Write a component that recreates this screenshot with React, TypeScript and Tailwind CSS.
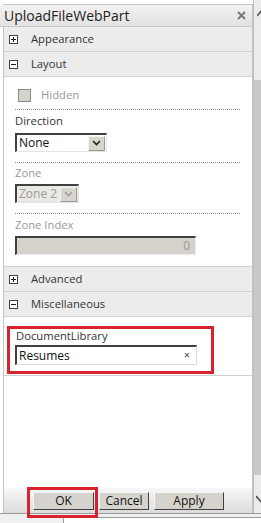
import React from 'react';

const Dotted = () => (
  <div className="ml-[11px] mr-[12px] border-t border-dotted border-[#7d8fb5]" />
);

const ToggleBox = ({ open }: { open: boolean }) => (
  <div className="w-[9px] h-[9px] border border-[#444] bg-white flex items-center justify-center">
    <svg width="7" height="7" viewBox="0 0 7 7">
      <line x1="1" y1="3.5" x2="6" y2="3.5" stroke="#222" strokeWidth="1" />
      {!open && <line x1="3.5" y1="1" x2="3.5" y2="6" stroke="#222" strokeWidth="1" />}
    </svg>
  </div>
);

const SectionRow = ({ label, open }: { label: string; open: boolean }) => (
  <div className="h-[25px] flex items-center pl-[5px] gap-[13px] bg-[#ececec] border-b border-[#d2d2d2] text-[11.25px] text-[#333]">
    <ToggleBox open={open} />
    <span>{label}</span>
  </div>
);

const Chevron = ({ color }: { color: string }) => (
  <svg width="9" height="6" viewBox="0 0 9 6">
    <path d="M1 1 L4.5 4.5 L8 1" fill="none" stroke={color} strokeWidth="1.6" />
  </svg>
);

const SelectBox = ({ value, width, disabled }: { value: string; width: string; disabled?: boolean }) => (
  <div
    className={`${width} h-[19px] flex items-center border-t-2 border-l-2 border-b border-r border-t-[#404040] border-l-[#404040] border-b-[#e4e4e4] border-r-[#e4e4e4] ${
      disabled ? 'bg-[#ebe9e4] text-[#9a9a9a]' : 'bg-white text-[#111]'
    }`}
  >
    <span className="flex-1 pl-[2px] text-[12px] leading-none">{value}</span>
    <div className="w-[17px] h-[15px] mr-[1px] bg-[#d8d5cf] border border-[#f4f4f4] border-b-[#9a9a9a] border-r-[#9a9a9a] flex items-center justify-center">
      <Chevron color={disabled ? '#a0a0a0' : '#222'} />
    </div>
  </div>
);

const Btn = ({ label, width }: { label: string; width: string }) => (
  <div className={`${width} h-[18px] flex items-center justify-center bg-[#d6d3ce] border border-t-[#f6f6f6] border-l-[#f6f6f6] border-b-[#404040] border-r-[#404040] text-[12px] text-[#111]`}>
    {label}
  </div>
);

export default function App() {
  return (
    <div className="w-[261px] h-[523px] bg-[#f4f4f4] flex flex-col overflow-hidden font-['Open_Sans',sans-serif]">
      <div className="flex h-[513px]">
        {/* tool pane */}
        <div className="w-[253px] flex flex-col pt-[4px] bg-white">
          <div className="flex-1 flex flex-col border-t border-r border-[#c4c4c4] ml-[3px] border-l relative">
            <div className="-ml-[4px] h-[22px] flex items-center justify-between pl-[4px] pr-[6px] bg-gradient-to-b from-[#f2f2f2] to-[#e2e2e2] border-b border-[#c8c8c8]">
              <span className="text-[14px] text-[#222]">UploadFileWebPart</span>
              <svg width="9" height="9" viewBox="0 0 9 9">
                <path d="M1 1 L8 8 M8 1 L1 8" stroke="#7a7a7a" strokeWidth="2" />
              </svg>
            </div>
            <SectionRow label="Appearance" open={false} />
            <SectionRow label="Layout" open />

            <div className="flex flex-col pb-[11px] text-[11.25px]">
              <div className="h-[32px] flex items-center pl-[14px] gap-[10px] text-[#999] pt-[4px]">
                <div className="w-[13px] h-[13px] bg-[#d5d2cb] border border-[#8a8a8a]" />
                <span>Hidden</span>
              </div>
              <Dotted />
              <div className="pl-[11px] h-[23px] flex items-center text-[#333]">Direction</div>
              <div className="pl-[11px]">
                <SelectBox value="None" width="w-[92px]" />
              </div>
              <div className="h-[10px]" />
              <Dotted />
              <div className="pl-[11px] h-[21px] flex items-center text-[#999]">Zone</div>
              <div className="pl-[11px]">
                <SelectBox value="Zone 2" width="w-[64px]" disabled />
              </div>
              <div className="h-[10px]" />
              <Dotted />
              <div className="pl-[11px] h-[22px] flex items-center text-[#999]">Zone Index</div>
              <div className="pl-[11px]">
                <div className="w-[181px] h-[19px] flex items-center justify-end pr-[5px] bg-[#d5d2cb] border-t-2 border-l-2 border-b border-r border-t-[#404040] border-l-[#404040] border-b-[#ececec] border-r-[#ececec] text-[12px] text-[#999]">
                  0
                </div>
              </div>
            </div>
            <div className="border-t border-[#d2d2d2]" />
            <SectionRow label="Advanced" open={false} />
            <SectionRow label="Miscellaneous" open />

            <div className="pt-[9px] pl-[3px] pb-[1px]">
              <div className="w-[207px] h-[48px] border-[3px] border-[#d8232f] pl-[5px] flex flex-col">
                <div className="h-[16px] flex items-start text-[11.25px] text-[#333] leading-[14px] pl-[1px]">DocumentLibrary</div>
                <div className="w-[182px] h-[20px] flex items-center justify-between pl-[2px] pr-[6px] bg-white border-t-2 border-l-2 border-b border-r border-t-[#404040] border-l-[#404040] border-b-[#dcdcdc] border-r-[#dcdcdc] text-[12px] text-[#111]">
                  <span>Resumes</span>
                  <span className="text-[11px] text-[#444]">×</span>
                </div>
              </div>
            </div>
            <div className="border-t border-[#cfcfcf]" />
            <div className="flex-1" />

            <div className="h-[25px] bg-gradient-to-b from-[#f8f8f8] to-[#dcdcdc] flex items-center pl-[29px] gap-[5px]">
              <Btn label="OK" width="w-[61px]" />
              <Btn label="Cancel" width="w-[50px]" />
              <Btn label="Apply" width="w-[70px]" />
            </div>
            {/* highlight around OK */}
            <div className="absolute left-[23px] bottom-[-5px] w-[71px] h-[31px] border-[3px] border-[#d8232f]" />
          </div>
        </div>

        {/* scrollbar */}
        <div className="w-[8px] flex flex-col bg-[#ececec] border-l border-[#bdbdbd]">
          <div className="h-[80px] relative">
            <svg className="absolute left-[3px] top-[9px]" width="8" height="8" viewBox="0 0 8 8">
              <path d="M0 7 L5 1" stroke="#555" strokeWidth="1.6" fill="none" />
            </svg>
          </div>
          <div className="flex-1 bg-[#c9c9c9]" />
          <div className="h-[38px] relative">
            <svg className="absolute left-[2px] top-[20px]" width="8" height="10" viewBox="0 0 8 10">
              <path d="M0 1 L6 8" stroke="#555" strokeWidth="1.6" fill="none" />
            </svg>
          </div>
        </div>
      </div>

      {/* status strip below */}
      <div className="h-[10px] border-t border-[#9a9a9a] bg-[#f0f0f0] flex pt-[3px]">
        <div className="w-[63px]" />
        <div className="flex-1 border-t border-l border-[#9a9a9a] bg-white" />
      </div>
    </div>
  );
}
